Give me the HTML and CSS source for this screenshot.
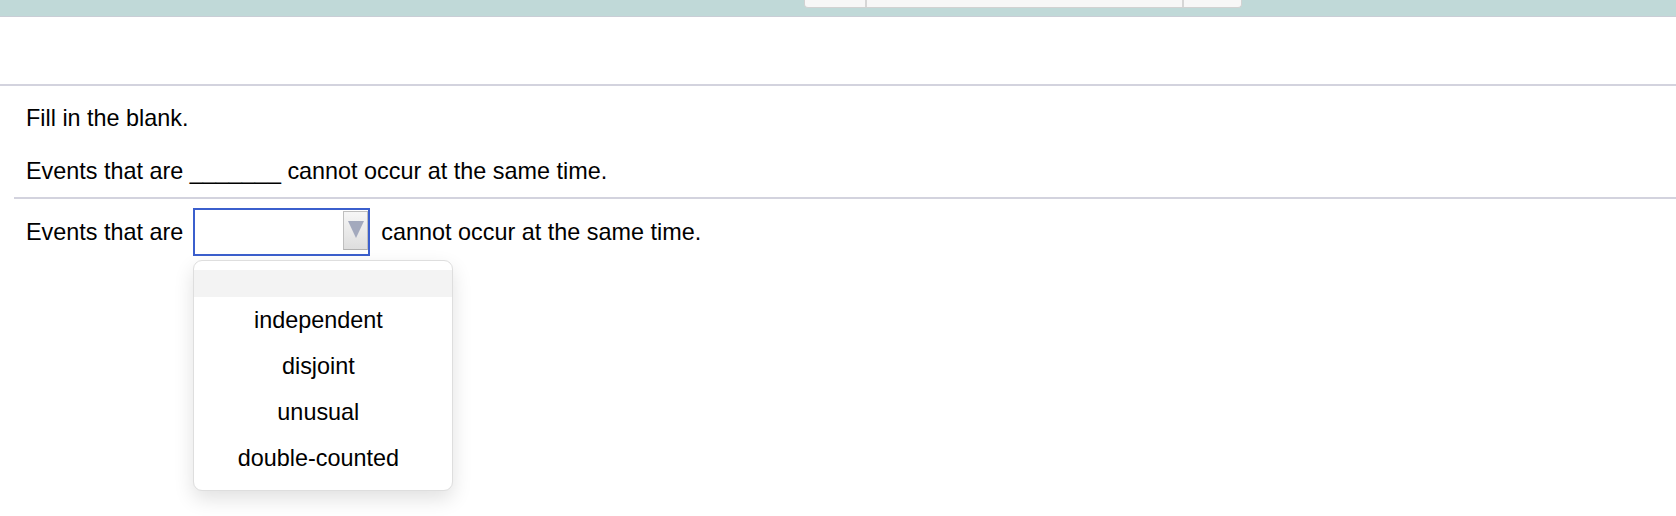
FILE: index.html
```html
<!DOCTYPE html>
<html lang="en">
<head>
<meta charset="utf-8">
<title>Fill in the blank</title>
<link rel="stylesheet" href="styles.css">
</head>
<body>
<div class="topbar">
  <div class="tabs">
    <div class="tab tab-a"></div>
    <div class="tab tab-b"></div>
    <div class="tab tab-c"></div>
  </div>
</div>
<div class="header-space"></div>
<div class="question">
  <div class="prompt">
    <p class="line first">Fill in the blank.</p>
    <p class="line">Events that are _______ cannot occur at the same time.</p>
  </div>
  <div class="answer">
    <span class="text">Events that are</span>
    <div class="select-wrap">
      <div class="select">
        <div class="arrow-btn">
          <svg width="16" height="17" viewBox="0 0 16 17"><polygon points="0,0 16,0 8,17" fill="#a3a9bd"/></svg>
        </div>
      </div>
      <ul class="menu">
        <li class="blank"></li>
        <li class="opt">independent</li>
        <li class="opt">disjoint</li>
        <li class="opt">unusual</li>
        <li class="opt">double-counted</li>
      </ul>
    </div>
    <span class="text after">cannot occur at the same time.</span>
  </div>
</div>
</body>
</html>
```

FILE: styles.css
```css
* { box-sizing: border-box; }

html, body {
  min-height: 100vh;
}

body {
  margin: 0;
  background: #ffffff;
  font-family: "Liberation Sans", Arial, Helvetica, sans-serif;
  font-size: 23.4px;
  color: #000;
}

.topbar {
  height: 17px;
  background: #c0d9d8;
  border-bottom: 1px solid #c9ced6;
  display: flex;
  align-items: flex-start;
}

.tabs {
  margin-left: 804px;
  width: 438px;
  height: 8px;
  display: flex;
  background: #f7f7f7;
  border: 1px solid #d2d2d2;
  border-top: none;
  border-radius: 0 0 4px 4px;
}

.tab { height: 100%; }
.tab-a { width: 60px; }
.tab-b { width: 317px; border-left: 2px solid #d6d6d6; }
.tab-c { flex: 1; border-left: 2px solid #d6d6d6; }

.header-space {
  height: 69px;
  border-bottom: 2px solid #d3d3de;
}

.question {
  margin-left: 14px;
  padding-bottom: 40px;
}

.prompt {
  padding: 19px 0 13px 12px;
  border-bottom: 2px solid #d3d3de;
}

.line {
  margin: 0;
  line-height: 26px;
  white-space: nowrap;
}

.line.first { margin-bottom: 27px; }

.answer {
  display: flex;
  align-items: flex-start;
  padding: 9px 0 0 12px;
  gap: 10px;
}

.answer .text {
  line-height: 26px;
  margin-top: 11px;
  white-space: nowrap;
}

.answer .text.after { margin-left: 1px; }

.select-wrap {
  width: 177px;
  display: flex;
  flex-direction: column;
  align-items: flex-start;
  gap: 4px;
}

.select {
  width: 177px;
  height: 48px;
  border: 2px solid #3b5fcd;
  background: #fff;
  display: flex;
  justify-content: flex-end;
  align-items: flex-start;
  padding: 1px 0 0 0;
}

.arrow-btn {
  width: 25px;
  height: 39px;
  border: 1px solid #bfbfbf;
  border-bottom-color: #b0b0b0;
  background: linear-gradient(#f6f6f6, #dedede);
  display: flex;
  align-items: center;
  justify-content: center;
  padding-bottom: 2px;
}

.menu {
  flex: none;
  width: 260px;
  margin: 0;
  padding: 9px 0 9px;
  list-style: none;
  background: #fff;
  border: 1px solid #dedede;
  border-radius: 9px;
  box-shadow: 0 8px 20px rgba(0, 0, 0, 0.12);
}

.menu .blank {
  height: 27px;
  background: #f3f3f3;
}

.menu .opt {
  line-height: 46px;
  text-align: center;
  padding-right: 10px;
  white-space: nowrap;
}
```
